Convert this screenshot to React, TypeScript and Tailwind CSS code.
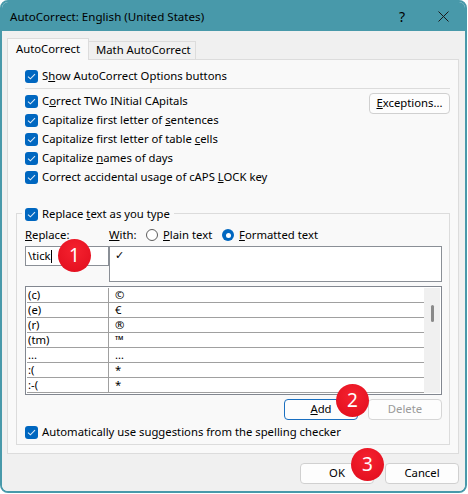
import React from 'react';

const font = "font-['Noto_Sans',sans-serif]";

function Check() {
  return (
    <span className="w-[13px] h-[13px] rounded-[3px] bg-[#0067c0] flex items-center justify-center shrink-0">
      <svg width="9" height="7" viewBox="0 0 9 7">
        <path d="M1 3.6 L3.4 5.8 L8 1.2" stroke="#dbe9f7" strokeWidth="1.1" fill="none" />
      </svg>
    </span>
  );
}

function CheckRow({ children }: { children: React.ReactNode }) {
  return (
    <div className="flex items-center h-[19px] gap-[4px] whitespace-nowrap">
      <Check />
      <span>{children}</span>
    </div>
  );
}

function Badge({ n, className }: { n: string; className: string }) {
  return (
    <div
      className={`absolute w-[33px] h-[33px] rounded-full bg-[radial-gradient(circle_at_50%_35%,#f5222f,#e00c1c)] text-white text-[19px] leading-none flex items-center justify-center z-10 ${className}`}
    >
      {n}
    </div>
  );
}

function Btn({ children, className = '' }: { children: React.ReactNode; className?: string }) {
  return (
    <div
      className={`w-[74px] h-[21px] rounded-[4px] border bg-[#fdfdfd] flex items-center justify-center whitespace-nowrap ${className}`}
    >
      {children}
    </div>
  );
}

const rows: [string, string][] = [
  ['(c)', '©'],
  ['(e)', '€'],
  ['(r)', '®'],
  ['(tm)', '™'],
  ['...', '…'],
  [':(', '*'],
  [':-(', '*'],
];

export default function App() {
  return (
    <div className={`w-[468px] h-[494px] bg-white text-[11.3px] text-black ${font}`}>
      <div className="w-[467px] h-[493px] border-2 border-[#4899aa] rounded-[8px] overflow-hidden flex flex-col">
        {/* title bar */}
        <div className="h-[29px] bg-[#4899aa] flex items-center pl-[8px] shrink-0">
          <span className="flex-1 text-[11.6px]">AutoCorrect: English (United States)</span>
          <span className="text-[14px] w-[20px] text-center mr-[26px]">?</span>
          <svg width="11" height="11" viewBox="0 0 11 11" className="mr-[16px]">
            <path d="M0.5 0.5 L10.5 10.5 M10.5 0.5 L0.5 10.5" stroke="#1a1a1a" strokeWidth="1" />
          </svg>
        </div>

        {/* body */}
        <div className="flex-1 bg-[#f0f0f0] pl-[5px] pr-[6px] pt-[7px] flex flex-col">
          {/* tabs */}
          <div className="flex items-end h-[22px] relative z-10 -mb-[1px] whitespace-nowrap">
            <div className="h-[22px] w-[82px] bg-[#f9f9f9] border border-b-0 border-[#dcdcdc] pl-[8px] flex items-center">
              AutoCorrect
            </div>
            <div className="h-[19px] w-[107px] bg-[#f0f0f0] border border-l-0 border-[#dcdcdc] pl-[7px] flex items-center">
              Math AutoCorrect
            </div>
          </div>

          {/* panel */}
          <div className="h-[395px] border border-[#dcdcdc] bg-[#f9f9f9] flex flex-col">
            <div className="pl-[17px] pr-[8px] pt-[7px]">
              <CheckRow>
                S<u>h</u>ow AutoCorrect Options buttons
              </CheckRow>
              <div className="h-px bg-[#dcdcdc] mt-[2px]" />
              <div className="flex mt-[3px]">
                <div className="flex-1">
                  <CheckRow>
                    C<u>o</u>rrect TWo INitial CApitals
                  </CheckRow>
                  <CheckRow>
                    Capitalize first letter of <u>s</u>entences
                  </CheckRow>
                  <CheckRow>
                    Capitalize first letter of table <u>c</u>ells
                  </CheckRow>
                  <CheckRow>
                    Capitalize <u>n</u>ames of days
                  </CheckRow>
                  <CheckRow>
                    Correct accidental usage of cAPS <u>L</u>OCK key
                  </CheckRow>
                </div>
                <Btn className="mt-[1px] w-[81px] border-[#d0d0d0]">
                  <span>
                    <u>E</u>xceptions...
                  </span>
                </Btn>
              </div>
            </div>

            {/* group box */}
            <div className="mx-[8px] mt-[26px] border border-[#dcdcdc] pl-[8px] pr-[7px] pb-[2px] flex flex-col">
              <div className="flex items-center h-[16px] -mt-[8px] -ml-[3px] pl-[3px] pr-[4px] gap-[4px] bg-[#f9f9f9] w-fit whitespace-nowrap">
                <Check />
                <span>
                  Replace <u>t</u>ext as you type
                </span>
              </div>

              <div className="flex items-center h-[16px] mt-[5px] whitespace-nowrap">
                <span className="w-[84px]">
                  <u>R</u>eplace:
                </span>
                <span className="w-[37px]">
                  <u>W</u>ith:
                </span>
                <span className="w-[12px] h-[12px] rounded-full border border-[#5c5c5c] bg-white" />
                <span className="ml-[5px] w-[59px]">
                  <u>P</u>lain text
                </span>
                <span className="w-[12px] h-[12px] rounded-full bg-[#0067c0] flex items-center justify-center">
                  <span className="w-[5px] h-[5px] rounded-full bg-white" />
                </span>
                <span className="ml-[5px]">
                  <u>F</u>ormatted text
                </span>
              </div>

              <div className="flex mt-[3px]">
                <div className="relative w-[84px] h-[20px] border border-[#8a8f96] bg-white flex items-center pl-[2px]">
                  <span>\tick</span>
                  <span className="w-px h-[13px] bg-black" />
                  <Badge n="1" className="left-[32px] -top-[8px]" />
                </div>
                <div className="flex-1 h-[36px] border border-[#8a8f96] bg-white pl-[5px] leading-[16px]">
                  ✓
                </div>
              </div>

              {/* table */}
              <div className="mt-[4px] border border-[#828790] bg-white p-px flex">
                <div className="flex-1">
                  {rows.map(([a, b], i) => (
                    <div key={i} className="flex h-[15px] border-b border-[#a0a0a0] leading-[14px] overflow-hidden">
                      <div className="w-[82px] border-r border-[#a0a0a0] pl-[1px]">{a}</div>
                      <div className="pl-[6px]">{b}</div>
                    </div>
                  ))}
                </div>
                <div className="w-[16px] bg-[#f0f0f0] flex justify-center pt-[17px]">
                  <div className="w-[3px] h-[17px] rounded-[2px] bg-[#8a8a8a]" />
                </div>
              </div>

              <div className="flex justify-end gap-[10px] mt-[4px]">
                <div className="relative">
                  <Btn className="border-[#1a6fc0]">
                    <span>
                      <u>A</u>dd
                    </span>
                  </Btn>
                  <Badge n="2" className="left-[52px] -top-[15px]" />
                </div>
                <Btn className="border-[#d6d6d6] text-[#9a9a9a]">Delete</Btn>
              </div>

              <div className="mt-[3px]">
                <CheckRow>
                  Automatically use su<u>g</u>gestions from the spelling checker
                </CheckRow>
              </div>
            </div>
          </div>

          {/* bottom buttons */}
          <div className="flex justify-end gap-[11px] mt-[9px]">
            <div className="relative">
              <Btn className="border-[#d0d0d0]">OK</Btn>
              <Badge n="3" className="left-[51px] -top-[15px]" />
            </div>
            <Btn className="border-[#d0d0d0]">Cancel</Btn>
          </div>
        </div>
      </div>
    </div>
  );
}
